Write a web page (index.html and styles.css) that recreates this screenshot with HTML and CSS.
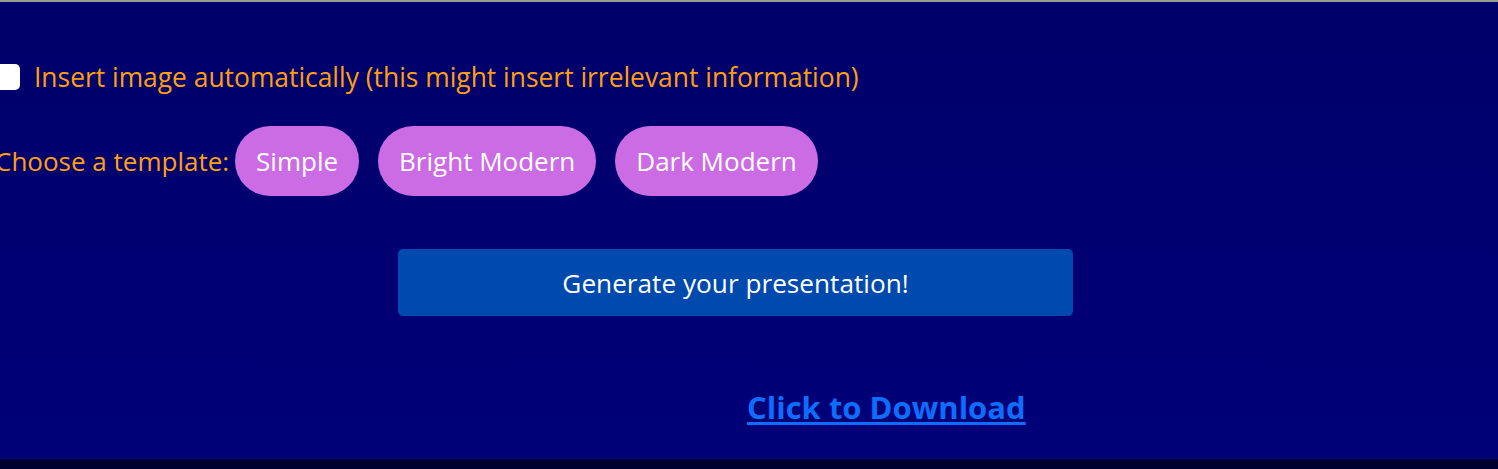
FILE: index.html
```html
<!DOCTYPE html>
<html lang="en">
<head>
<meta charset="utf-8">
<title>Generate presentation</title>
<link rel="stylesheet" href="styles.css">
</head>
<body>
<div class="page">
  <div class="content">
    <label class="check-row">
      <input type="checkbox" class="check">
      <span class="check-label">Insert image automatically (this might insert irrelevant information)</span>
    </label>
    <div class="template-row">
      <span class="template-label">Choose a template:</span>
      <button class="pill pill-first">Simple</button>
      <button class="pill">Bright Modern</button>
      <button class="pill">Dark Modern</button>
    </div>
    <div class="generate-wrap">
      <button class="generate">Generate your presentation!</button>
    </div>
    <div class="download-wrap">
      <a class="download" href="#">Click to Download</a>
    </div>
  </div>
  <div class="footer"></div>
</div>
</body>
</html>
```
FILE: styles.css
```css
html, body {
  margin: 0;
  padding: 0;
}
body {
  background: #000070;
  font-family: "Open Sans", "Noto Sans", sans-serif;
  overflow: hidden;
}
.page {
  width: 1498px;
  height: 469px;
  display: flex;
  flex-direction: column;
  border-top: 2px solid #9a9a9a;
  box-sizing: border-box;
}
.content {
  flex: 1;
  display: flex;
  flex-direction: column;
  background: linear-gradient(to bottom, #00006a, #000078);
}
.check-row {
  display: flex;
  align-items: center;
  margin-top: 62px;
  margin-left: -4px;
  height: 26px;
}
.check {
  appearance: none;
  -webkit-appearance: none;
  width: 24px;
  height: 26px;
  margin: 0;
  background: #ffffff;
  border-radius: 5px;
  border: none;
}
.check-label {
  color: #ff9f0f;
  font-size: 26.4px;
  margin-left: 14px;
  white-space: nowrap;
}
.template-row {
  display: flex;
  align-items: center;
  margin-top: 36px;
  margin-left: -5px;
  height: 70px;
}
.template-label {
  color: #ff9f0f;
  font-size: 26px;
  white-space: nowrap;
}
.pill {
  height: 70px;
  padding: 0 21px;
  border: none;
  border-radius: 35px;
  background: #cb6ce4;
  color: #ffffff;
  font-family: inherit;
  font-size: 26px;
  margin-left: 19px;
}
.pill-first {
  margin-left: 6px;
}
.generate-wrap {
  display: flex;
  margin-top: 53px;
  padding-left: 398px;
}
.generate {
  width: 675px;
  height: 67px;
  border: none;
  border-radius: 5px;
  background: #004aad;
  color: #ffffff;
  font-family: inherit;
  font-size: 26.2px;
}
.download-wrap {
  display: flex;
  margin-top: 70px;
  padding-left: 747px;
}
.download {
  color: #0d6efd;
  font-weight: 700;
  font-size: 31px;
  text-decoration: underline;
  text-decoration-thickness: 3px;
  text-underline-offset: 3px;
  white-space: nowrap;
}
.footer {
  height: 10px;
  background: #000030;
}
```
